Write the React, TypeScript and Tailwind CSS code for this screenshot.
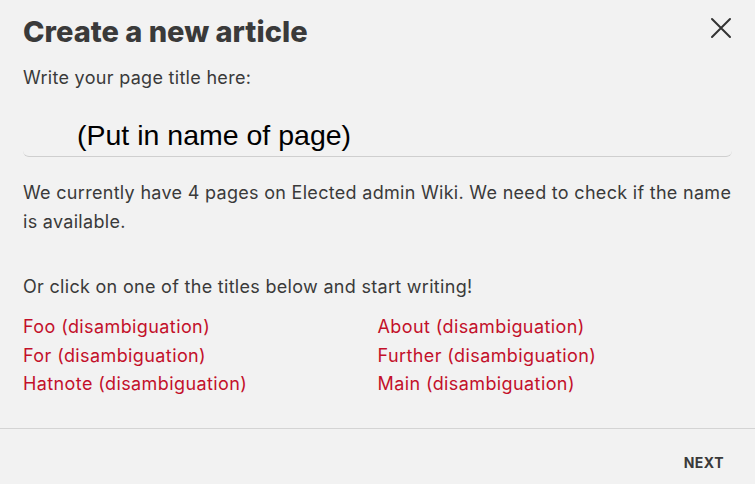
export default function App() {
  const left = ["Foo (disambiguation)", "For (disambiguation)", "Hatnote (disambiguation)"];
  const right = ["About (disambiguation)", "Further (disambiguation)", "Main (disambiguation)"];

  return (
    <div
      className="w-[755px] h-[484px] bg-[#f2f2f2] text-[#3a3a3a] flex flex-col overflow-hidden"
      style={{ fontFamily: "Inter, 'Noto Sans', sans-serif" }}
    >
      <div className="flex-1 px-[23px] pt-[14px]">
        <div className="flex items-start justify-between">
          <h1 className="text-[29px] leading-[36px] font-extrabold tracking-[0px]">Create a new article</h1>
          <button className="mt-[2px] -mr-[1px] text-[#333]">
            <svg width="24" height="24" viewBox="0 0 24 24" fill="none" stroke="currentColor" strokeWidth="2" strokeLinecap="round">
              <path d="M3 3L21 21M21 3L3 21" />
            </svg>
          </button>
        </div>
        <p className="mt-[16px] text-[18px] leading-[24px] tracking-[0.3px]">Write your page title here:</p>
        <div className="mt-[28px] border-b border-[#cfcfcf] rounded-[6px] pl-[54px] pb-[4px]">
          <span className="text-[28.5px] leading-[34px] text-black" style={{ fontFamily: "'Liberation Sans', Arial, sans-serif" }}>
            (Put in name of page)
          </span>
        </div>
        <p className="mt-[21px] text-[18px] leading-[29px] tracking-[0.3px]">
          We currently have 4 pages on Elected admin Wiki. We need to check if the name is available.
        </p>
        <p className="mt-[36px] text-[18px] leading-[29px] tracking-[0.3px]">Or click on one of the titles below and start writing!</p>
        <div className="mt-[12px] grid grid-cols-2 text-[18px] leading-[28.5px] tracking-[0.4px] text-[#c3102a]">
          <div className="flex flex-col">
            {left.map((t) => (
              <a key={t} href="#">{t}</a>
            ))}
          </div>
          <div className="flex flex-col">
            {right.map((t) => (
              <a key={t} href="#">{t}</a>
            ))}
          </div>
        </div>
      </div>
      <div className="border-t border-[#d4d4d4] h-[56px] flex items-start justify-end pt-[24px] pr-[31px]">
        <button className="text-[14px] leading-[20px] font-bold tracking-[0.5px] text-[#3a3a3a]">NEXT</button>
      </div>
    </div>
  );
}
